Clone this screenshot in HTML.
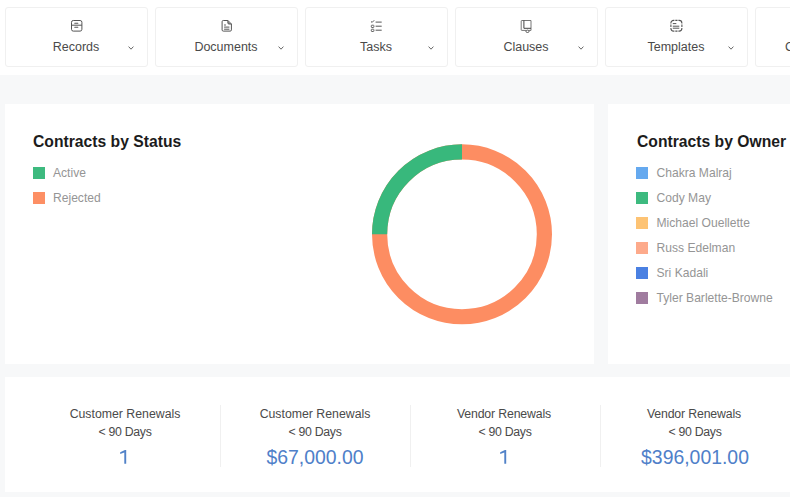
<!DOCTYPE html>
<html><head><meta charset="utf-8">
<style>
*{box-sizing:border-box;margin:0;padding:0}
html,body{width:790px;height:497px;overflow:hidden}
body{position:relative;background:#f7f8f9;font-family:"Liberation Sans",sans-serif;color:#333}
#top{position:absolute;left:0;top:0;width:790px;height:75px;background:#fff}
.nav{position:absolute;top:7px;width:143px;height:60px;border:1px solid #f0f0f0;border-radius:3px;background:#fff}
.nav svg.ic{position:absolute;left:64.5px;top:12.3px;width:12px;height:12px;overflow:visible}
.nav .lb{position:absolute;left:0;right:1px;top:32px;text-align:center;font-size:12.5px;color:#4a4a4a;line-height:14px}
.nav svg.ch{position:absolute;left:122px;top:37.5px;width:6px;height:4px}
.panel{position:absolute;background:#fff}
.title{position:absolute;font-weight:700;font-size:15.7px;color:#1c1c1c;line-height:18px;white-space:nowrap}
.leg{position:absolute;font-size:12.1px;color:#959595;line-height:14px;white-space:nowrap}
.sq{position:absolute;width:12px;height:12px}
.stat{position:absolute;top:0;width:190px;text-align:center}
.stat .l{position:absolute;left:0;right:0;font-size:12.3px;color:#4a4a4a;line-height:14px;white-space:nowrap}
.stat .v{position:absolute;left:0;right:0;font-size:19.4px;color:#4f80c9;line-height:22px;white-space:nowrap}
.div{position:absolute;width:1px;background:#f0f0f0}
</style></head><body>
<div id="top"></div>

<div class="nav" style="left:5px">
  <svg class="ic" viewBox="0 0 12 12" fill="none" stroke="#555" stroke-width="1"><rect x="0.5" y="0.5" width="10.4" height="10.6" rx="1.8"/><line x1="0.5" y1="5.2" x2="10.9" y2="5.2"/><line x1="3.8" y1="3.2" x2="6.8" y2="3.2" stroke-width="1.1" stroke-linecap="round"/><line x1="3.8" y1="7.2" x2="6.8" y2="7.2" stroke-width="1.1" stroke-linecap="round"/></svg>
  <div class="lb">Records</div>
  <svg class="ch" viewBox="0 0 6 4" fill="none" stroke="#666" stroke-width="1"><polyline points="0.6,0.6 3,3.2 5.4,0.6"/></svg>
</div>
<div class="nav" style="left:155px">
  <svg class="ic" viewBox="0 0 12 12" fill="none" stroke="#555" stroke-width="1"><path d="M2.3 0.5 H6.9 L10.4 4 V9.9 A1.2 1.2 0 0 1 9.2 11.1 H2.3 A1.2 1.2 0 0 1 1.1 9.9 V1.7 A1.2 1.2 0 0 1 2.3 0.5 Z"/><path d="M6.9 0.5 V3 A1 1 0 0 0 7.9 4 H10.4" fill="#999"/><line x1="3.1" y1="5" x2="4.9" y2="5"/><line x1="3.1" y1="7.1" x2="8.4" y2="7.1"/><line x1="3.1" y1="9.2" x2="8.4" y2="9.2"/></svg>
  <div class="lb">Documents</div>
  <svg class="ch" viewBox="0 0 6 4" fill="none" stroke="#666" stroke-width="1"><polyline points="0.6,0.6 3,3.2 5.4,0.6"/></svg>
</div>
<div class="nav" style="left:305px">
  <svg class="ic" viewBox="0 0 12 12" fill="none" stroke="#555" stroke-width="1"><polyline points="0,1.6 1.2,2.3 3.2,0.3"/><rect x="0.3" y="5.2" width="2.6" height="2.3" rx="0.6" stroke-width="0.9"/><rect x="0.3" y="9.2" width="2.6" height="2.3" rx="0.6" stroke-width="0.9"/><line x1="4.6" y1="2.1" x2="10.7" y2="2.1"/><line x1="4.6" y1="6.2" x2="10.7" y2="6.2"/><line x1="4.6" y1="10.2" x2="10.7" y2="10.2"/></svg>
  <div class="lb">Tasks</div>
  <svg class="ch" viewBox="0 0 6 4" fill="none" stroke="#666" stroke-width="1"><polyline points="0.6,0.6 3,3.2 5.4,0.6"/></svg>
</div>
<div class="nav" style="left:455px">
  <svg class="ic" viewBox="0 0 12 12" fill="none" stroke="#555" stroke-width="1"><path d="M5 10.4 H0.7 A0.5 0.5 0 0 1 0.2 9.9 V1 A0.5 0.5 0 0 1 0.7 0.5 H10 V10.4 H8" stroke="#777"/><path d="M2.9 0.5 V8.3 H10" stroke="#444"/><ellipse cx="6.5" cy="11.3" rx="1.55" ry="1.2" stroke="#555"/></svg>
  <div class="lb">Clauses</div>
  <svg class="ch" viewBox="0 0 6 4" fill="none" stroke="#666" stroke-width="1"><polyline points="0.6,0.6 3,3.2 5.4,0.6"/></svg>
</div>
<div class="nav" style="left:605px">
  <svg class="ic" viewBox="0 0 12 12" fill="none" stroke="#555" stroke-width="1.1"><path d="M-0.1 3.6 V3.2 A2.8 2.8 0 0 1 2.7 0.4 H3.4 M7.4 0.4 H8.1 A2.8 2.8 0 0 1 10.9 3.2 V3.6 M10.9 7.9 V8.3 A2.8 2.8 0 0 1 8.1 11.1 H7.4 M3.4 11.1 H2.7 A2.8 2.8 0 0 1 -0.1 8.3 V7.9 M4.3 0.4 H6.5 M4.3 11.1 H6.5 M-0.1 4.6 V6.9 M10.9 4.6 V6.9"/><g stroke-width="1"><line x1="1.8" y1="3.6" x2="5.3" y2="3.6"/><line x1="1.8" y1="6.2" x2="8.3" y2="6.2"/><line x1="1.8" y1="8.2" x2="8.3" y2="8.2"/></g></svg>
  <div class="lb">Templates</div>
  <svg class="ch" viewBox="0 0 6 4" fill="none" stroke="#666" stroke-width="1"><polyline points="0.6,0.6 3,3.2 5.4,0.6"/></svg>
</div>
<div class="nav" style="left:755px;width:142px">
  <div class="lb" style="left:29px;right:auto;text-align:left">Contracts</div>
</div>

<!-- Panel 1 -->
<div class="panel" style="left:5px;top:104px;width:589px;height:260px">
  <div class="title" style="left:28px;top:29px">Contracts by Status</div>
  <div class="sq" style="left:28px;top:63px;background:#3dba7f"></div>
  <div class="leg" style="left:48px;top:62px">Active</div>
  <div class="sq" style="left:28px;top:88px;background:#fd8f64"></div>
  <div class="leg" style="left:48px;top:87px">Rejected</div>
  <svg style="position:absolute;left:357px;top:40px" width="200" height="200" viewBox="0 0 200 200">
    <circle cx="100" cy="90.35" r="82.4" fill="none" stroke="#fd8d62" stroke-width="15.2"/>
    <path d="M17.6 90.35 A82.4 82.4 0 0 1 100 7.95" fill="none" stroke="#38b87c" stroke-width="15.2"/>
  </svg>
</div>

<!-- Panel 2 -->
<div class="panel" style="left:608px;top:104px;width:200px;height:260px">
  <div class="title" style="left:29px;top:29px">Contracts by Owner</div>
  <div class="sq" style="left:28px;top:63px;background:#65a9ef"></div>
  <div class="leg" style="left:48.5px;top:62px">Chakra Malraj</div>
  <div class="sq" style="left:28px;top:88px;background:#3dba7f"></div>
  <div class="leg" style="left:48.5px;top:87px">Cody May</div>
  <div class="sq" style="left:28px;top:113px;background:#fdc374"></div>
  <div class="leg" style="left:48.5px;top:112px">Michael Ouellette</div>
  <div class="sq" style="left:28px;top:138px;background:#fdaa8b"></div>
  <div class="leg" style="left:48.5px;top:137px">Russ Edelman</div>
  <div class="sq" style="left:28px;top:163px;background:#4a80e2"></div>
  <div class="leg" style="left:48.5px;top:162px">Sri Kadali</div>
  <div class="sq" style="left:28px;top:188px;background:#a07c9f"></div>
  <div class="leg" style="left:48.5px;top:187px">Tyler Barlette-Browne</div>
</div>

<!-- Panel 3 -->
<div class="panel" style="left:5px;top:377px;width:800px;height:115px">
  <div class="stat" style="left:25px"><div class="l" style="top:30px">Customer Renewals</div><div class="l" style="top:48px;letter-spacing:-0.3px">&lt; 90 Days</div></div>
  <div class="div" style="left:215px;top:28px;height:62px"></div>
  <div class="stat" style="left:215px"><div class="l" style="top:30px">Customer Renewals</div><div class="l" style="top:48px;letter-spacing:-0.3px">&lt; 90 Days</div><div class="v" style="top:69px">$67,000.00</div></div>
  <div class="div" style="left:405px;top:28px;height:62px"></div>
  <div class="stat" style="left:405px"><div class="l" style="top:30px;letter-spacing:-0.15px;padding-right:2px">Vendor Renewals</div><div class="l" style="top:48px;letter-spacing:-0.3px">&lt; 90 Days</div></div>
  <div class="div" style="left:595px;top:28px;height:62px"></div>
  <div class="stat" style="left:595px"><div class="l" style="top:30px;letter-spacing:-0.15px;padding-right:2px">Vendor Renewals</div><div class="l" style="top:48px;letter-spacing:-0.3px">&lt; 90 Days</div><div class="v" style="top:69px">$396,001.00</div></div>
</div>
<svg style="position:absolute;left:118px;top:448px" width="10" height="18" viewBox="0 0 10 18"><path d="M8.2 2 V15.8 H6.3 V4.5 L2.2 6.0 V4.3 L6.9 2 Z" fill="#5182c8"/></svg>
<svg style="position:absolute;left:498px;top:448px" width="10" height="18" viewBox="0 0 10 18"><path d="M8.2 2 V15.8 H6.3 V4.5 L2.2 6.0 V4.3 L6.9 2 Z" fill="#5182c8"/></svg>
</body></html>
